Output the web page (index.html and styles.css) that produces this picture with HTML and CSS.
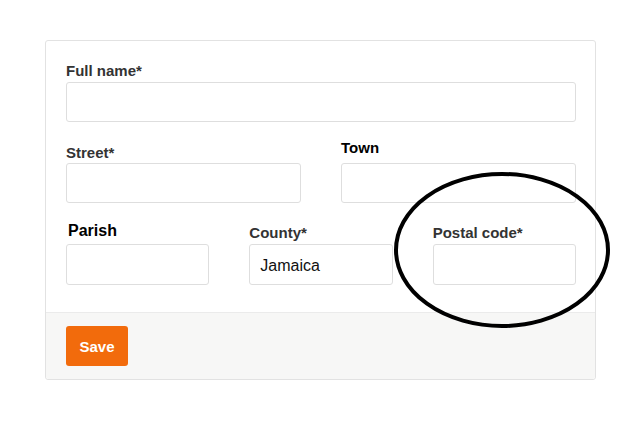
FILE: index.html
```html
<!DOCTYPE html>
<html>
<head>
<meta charset="utf-8">
<link rel="stylesheet" href="styles.css">
</head>
<body>
<div class="card">
  <div class="card-body">
    <div class="row">
      <div class="field">
        <label class="label">Full name*</label>
        <div class="input"></div>
      </div>
    </div>
    <div class="row row-2">
      <div class="field">
        <label class="label label-street">Street*</label>
        <div class="input"></div>
      </div>
      <div class="field">
        <label class="label label-town">Town</label>
        <div class="input"></div>
      </div>
    </div>
    <div class="row row-3">
      <div class="field">
        <label class="label label-parish">Parish</label>
        <div class="input input-tall"></div>
      </div>
      <div class="field">
        <label class="label label-county">County*</label>
        <div class="input input-tall"><span class="value">Jamaica</span></div>
      </div>
      <div class="field">
        <label class="label label-county">Postal code*</label>
        <div class="input input-tall"></div>
      </div>
    </div>
  </div>
  <div class="card-footer">
    <button class="btn-save">Save</button>
  </div>
</div>
<svg class="circle-mark" width="220" height="160" viewBox="0 0 220 160">
  <ellipse cx="109" cy="79" rx="106" ry="76" fill="none" stroke="#000" stroke-width="4"/>
</svg>
</body>
</html>
```

FILE: styles.css
```css
html, body {
  margin: 0;
  padding: 0;
  background: #ffffff;
}
body {
  font-family: "Liberation Sans", Arial, sans-serif;
  position: relative;
  width: 642px;
  height: 423px;
  overflow: hidden;
}
.card {
  margin: 40px 0 0 45px;
  width: 549px;
  border: 1px solid #e2e2e2;
  border-radius: 3px;
  background: #fff;
}
.card-body {
  padding: 21px 19px 27px 20px;
}
.row {
  display: grid;
  grid-template-columns: 1fr;
  align-items: end;
}
.row-2 {
  grid-template-columns: 1fr 1fr;
  column-gap: 40px;
  margin-top: 17px;
}
.row-3 {
  grid-template-columns: 1fr 1fr 1fr;
  column-gap: 40px;
  margin-top: 19px;
}
.field {
  display: flex;
  flex-direction: column;
  justify-content: flex-end;
}
.label {
  display: block;
  font-size: 15px;
  line-height: 17px;
  font-weight: bold;
  color: #333333;
  margin-bottom: 3px;
}
.label-street { margin-bottom: 2px; }
.label-town {
  color: #000;
  margin-bottom: 7px;
}
.label-parish {
  color: #000;
  font-size: 16px;
  line-height: 18px;
  margin-bottom: 4px;
  padding-left: 2px;
}
.input {
  height: 38px;
  border: 1px solid #dedede;
  border-radius: 3px;
  background: #fff;
  display: flex;
  align-items: center;
  padding-left: 10px;
}
.input-tall {
  height: 39px;
}
.value {
  font-size: 16px;
  color: #111;
  padding-top: 3px;
}
.card-footer {
  border-top: 1px solid #ebebeb;
  background: #f7f7f6;
  padding: 13px 20px 13px 20px;
  border-radius: 0 0 3px 3px;
}
.btn-save {
  display: block;
  width: 62px;
  height: 40px;
  border: none;
  border-radius: 3px;
  background: #f26b0c;
  color: #fff;
  font-family: "Liberation Sans", Arial, sans-serif;
  font-size: 15px;
  font-weight: bold;
  padding: 0;
}
.circle-mark {
  position: absolute;
  left: 393px;
  top: 171px;
}
```
